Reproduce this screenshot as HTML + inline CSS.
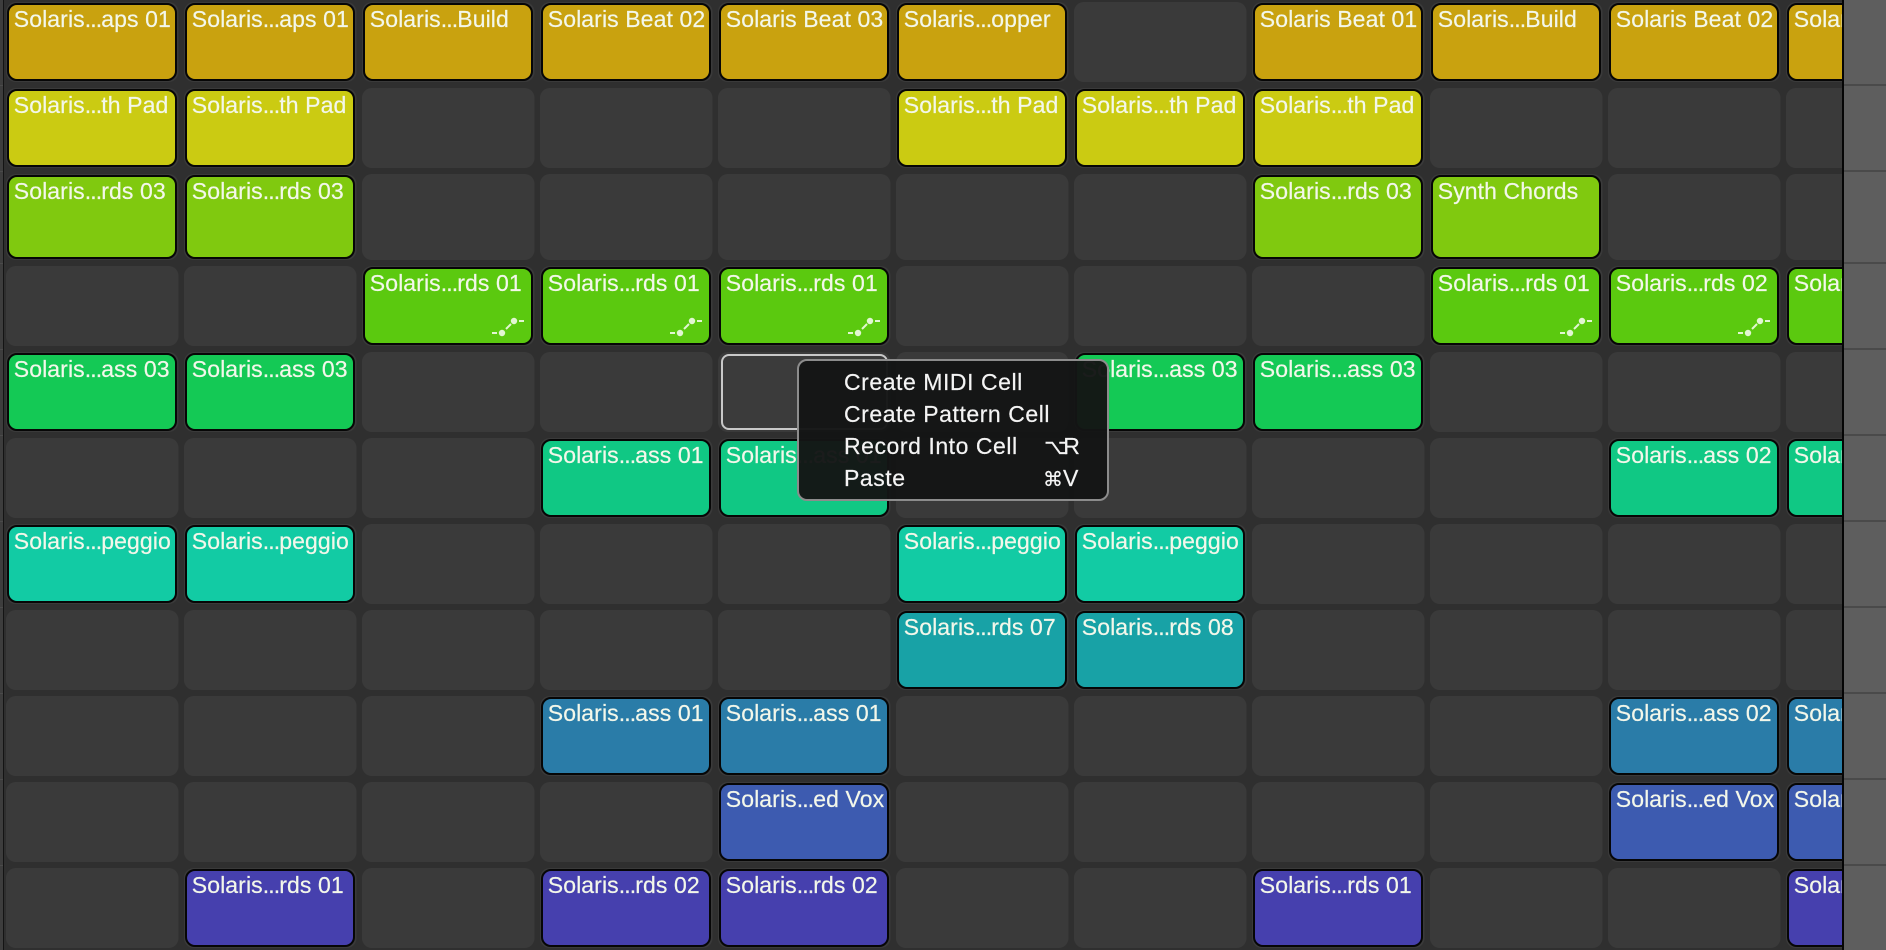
<!DOCTYPE html>
<html><head><meta charset="utf-8"><title>Cells</title>
<style>
html,body{margin:0;padding:0;width:1886px;height:950px;overflow:hidden;background:#2f2f2f}
body{position:relative;font-family:"Liberation Sans",sans-serif}
#bg{position:absolute;left:0;top:0}
.c{position:absolute;box-sizing:border-box;width:170.5px;margin-left:-.25px;margin-top:-.25px;height:78.5px;border:2px solid #060606;border-radius:10px;overflow:hidden;padding:1.25px 0 0 5px;font-size:23px;line-height:26.4px;letter-spacing:.1px;color:#f3f7ea;white-space:nowrap;-webkit-text-stroke:.2px #f3f7ea}
.c i{font-style:normal;letter-spacing:-.9px}
.c svg{position:absolute;left:-1.75px;top:-1.75px}
.k0{left:7px}.k1{left:185px}.k2{left:363px}.k3{left:541px}.k4{left:719px}.k5{left:897px}.k6{left:1075px}.k7{left:1253px}.k8{left:1431px}.k9{left:1609px}.k10{left:1787px}
.r0{top:3px;background:#c9a20f}
.r1{top:89px;background:#cbcb12}
.r2{top:175px;height:84.5px;background:#80c90f}
.r3{top:267px;background:#5bc90f}
.r4{top:353px;background:#14c955}
.r5{top:439px;background:#10c884}
.r6{top:525px;background:#12cba4}
.r7{top:611px;background:#18a2a6}
.r8{top:697px;background:#2a7ca8}
.r9{top:783px;background:#3d5bb0}
.r10{top:869px;background:#4640ae}
#sel{position:absolute;box-sizing:border-box;left:720.5px;top:354px;width:167px;height:76px;border:2px solid #c8c8c8;border-radius:8px;background:#3b3b3b}
#rp{position:absolute;left:1842px;top:0;width:44px;height:950px;background:#5e5e5e;border-left:2px solid #050505;box-sizing:border-box}
#lp{position:absolute;left:0;top:0;width:3px;height:950px;background:#3d3d3d;border-right:1.5px solid #141414}
.l{position:absolute;left:0;right:0;height:2px;background:#4a4a4a}
#m{position:absolute;box-sizing:border-box;left:797px;top:359px;width:312px;height:142px;border:2px solid #8c8c8c;border-radius:10px;background:rgba(20,21,21,.97);color:#f4f4f4;font-size:23px;line-height:32px;letter-spacing:.55px;white-space:nowrap;-webkit-text-stroke:.2px #f4f4f4}
#m div{position:absolute;left:45px}
#m span{position:absolute;left:244px;letter-spacing:0}
#m b{font-weight:normal;font-family:"DejaVu Sans",sans-serif}
</style></head><body>
<svg id="bg" width="1886" height="950" xmlns="http://www.w3.org/2000/svg">
<defs>
<pattern id="pa" patternUnits="userSpaceOnUse" x="6" y="2" width="178" height="86"><rect width="172.5" height="80" rx="10" fill="#3a3a3a"/></pattern>
<pattern id="pb" patternUnits="userSpaceOnUse" x="6" y="174" width="178" height="92"><rect width="172.5" height="86" rx="10" fill="#3a3a3a"/></pattern>
<pattern id="pc" patternUnits="userSpaceOnUse" x="6" y="266" width="178" height="86"><rect width="172.5" height="80" rx="10" fill="#3a3a3a"/></pattern>
<symbol id="au" viewBox="0 0 170 78" width="170" height="78">
<circle cx="139" cy="66" r="3.2" fill="#e2f6d2"/><circle cx="151" cy="54" r="3.2" fill="#e2f6d2"/>
<path d="M129 66h5M156 54h5M143 62l5-5" stroke="#e2f6d2" stroke-width="2" fill="none"/>
</symbol>
</defs>
<rect x="0" y="2" width="1842" height="172" fill="url(#pa)"/>
<rect x="0" y="174" width="1842" height="92" fill="url(#pb)"/>
<rect x="0" y="266" width="1842" height="684" fill="url(#pc)"/>
</svg>

<div class="c k0 r0">Solaris<i>...</i>aps 01</div>
<div class="c k1 r0">Solaris<i>...</i>aps 01</div>
<div class="c k2 r0">Solaris<i>...</i>Build</div>
<div class="c k3 r0">Solaris Beat 02</div>
<div class="c k4 r0">Solaris Beat 03</div>
<div class="c k5 r0">Solaris<i>...</i>opper</div>
<div class="c k7 r0">Solaris Beat 01</div>
<div class="c k8 r0">Solaris<i>...</i>Build</div>
<div class="c k9 r0">Solaris Beat 02</div>
<div class="c k10 r0">Solaris</div>

<div class="c k0 r1">Solaris<i>...</i>th Pad</div>
<div class="c k1 r1">Solaris<i>...</i>th Pad</div>
<div class="c k5 r1">Solaris<i>...</i>th Pad</div>
<div class="c k6 r1">Solaris<i>...</i>th Pad</div>
<div class="c k7 r1">Solaris<i>...</i>th Pad</div>

<div class="c k0 r2">Solaris<i>...</i>rds 03</div>
<div class="c k1 r2">Solaris<i>...</i>rds 03</div>
<div class="c k7 r2">Solaris<i>...</i>rds 03</div>
<div class="c k8 r2">Synth Chords</div>

<div class="c k2 r3">Solaris<i>...</i>rds 01<svg width="170" height="78"><use href="#au"/></svg></div>
<div class="c k3 r3">Solaris<i>...</i>rds 01<svg width="170" height="78"><use href="#au"/></svg></div>
<div class="c k4 r3">Solaris<i>...</i>rds 01<svg width="170" height="78"><use href="#au"/></svg></div>
<div class="c k8 r3">Solaris<i>...</i>rds 01<svg width="170" height="78"><use href="#au"/></svg></div>
<div class="c k9 r3">Solaris<i>...</i>rds 02<svg width="170" height="78"><use href="#au"/></svg></div>
<div class="c k10 r3">Solaris</div>

<div class="c k0 r4">Solaris<i>...</i>ass 03</div>
<div class="c k1 r4">Solaris<i>...</i>ass 03</div>
<div id="sel"></div>
<div class="c k6 r4">Solaris<i>...</i>ass 03</div>
<div class="c k7 r4">Solaris<i>...</i>ass 03</div>

<div class="c k3 r5">Solaris<i>...</i>ass 01</div>
<div class="c k4 r5">Solaris<i>...</i>ass 01</div>
<div class="c k9 r5">Solaris<i>...</i>ass 02</div>
<div class="c k10 r5">Solaris</div>

<div class="c k0 r6">Solaris<i>...</i>peggio</div>
<div class="c k1 r6">Solaris<i>...</i>peggio</div>
<div class="c k5 r6">Solaris<i>...</i>peggio</div>
<div class="c k6 r6">Solaris<i>...</i>peggio</div>

<div class="c k5 r7">Solaris<i>...</i>rds 07</div>
<div class="c k6 r7">Solaris<i>...</i>rds 08</div>

<div class="c k3 r8">Solaris<i>...</i>ass 01</div>
<div class="c k4 r8">Solaris<i>...</i>ass 01</div>
<div class="c k9 r8">Solaris<i>...</i>ass 02</div>
<div class="c k10 r8">Solaris</div>

<div class="c k4 r9">Solaris<i>...</i>ed Vox</div>
<div class="c k9 r9">Solaris<i>...</i>ed Vox</div>
<div class="c k10 r9">Solaris</div>

<div class="c k1 r10">Solaris<i>...</i>rds 01</div>
<div class="c k3 r10">Solaris<i>...</i>rds 02</div>
<div class="c k4 r10">Solaris<i>...</i>rds 02</div>
<div class="c k7 r10">Solaris<i>...</i>rds 01</div>
<div class="c k10 r10">Solaris</div>

<div id="lp">
<div class="l" style="top:85px;height:1px"></div><div class="l" style="top:171px;height:1px"></div><div class="l" style="top:263px;height:1px"></div><div class="l" style="top:349px;height:1px"></div><div class="l" style="top:435px;height:1px"></div><div class="l" style="top:521px;height:1px"></div><div class="l" style="top:607px;height:1px"></div><div class="l" style="top:693px;height:1px"></div><div class="l" style="top:779px;height:1px"></div><div class="l" style="top:865px;height:1px"></div>
</div>
<div id="rp">
<div class="l" style="top:84px"></div><div class="l" style="top:170px"></div><div class="l" style="top:262px"></div><div class="l" style="top:348px"></div><div class="l" style="top:434px"></div><div class="l" style="top:520px"></div><div class="l" style="top:606px"></div><div class="l" style="top:692px"></div><div class="l" style="top:778px"></div><div class="l" style="top:864px"></div>
</div>

<div id="m">
<div style="top:5.4px">Create MIDI Cell</div>
<div style="top:37.4px">Create Pattern Cell</div>
<div style="top:69.4px">Record Into Cell</div>
<div style="top:101.4px">Paste</div>
<span style="top:69.4px;left:245px"><b style="font-size:21px;letter-spacing:-5px">⌥</b>R</span>
<span style="top:101.4px"><b style="font-size:20px">⌘</b>V</span>
</div>
</body></html>
